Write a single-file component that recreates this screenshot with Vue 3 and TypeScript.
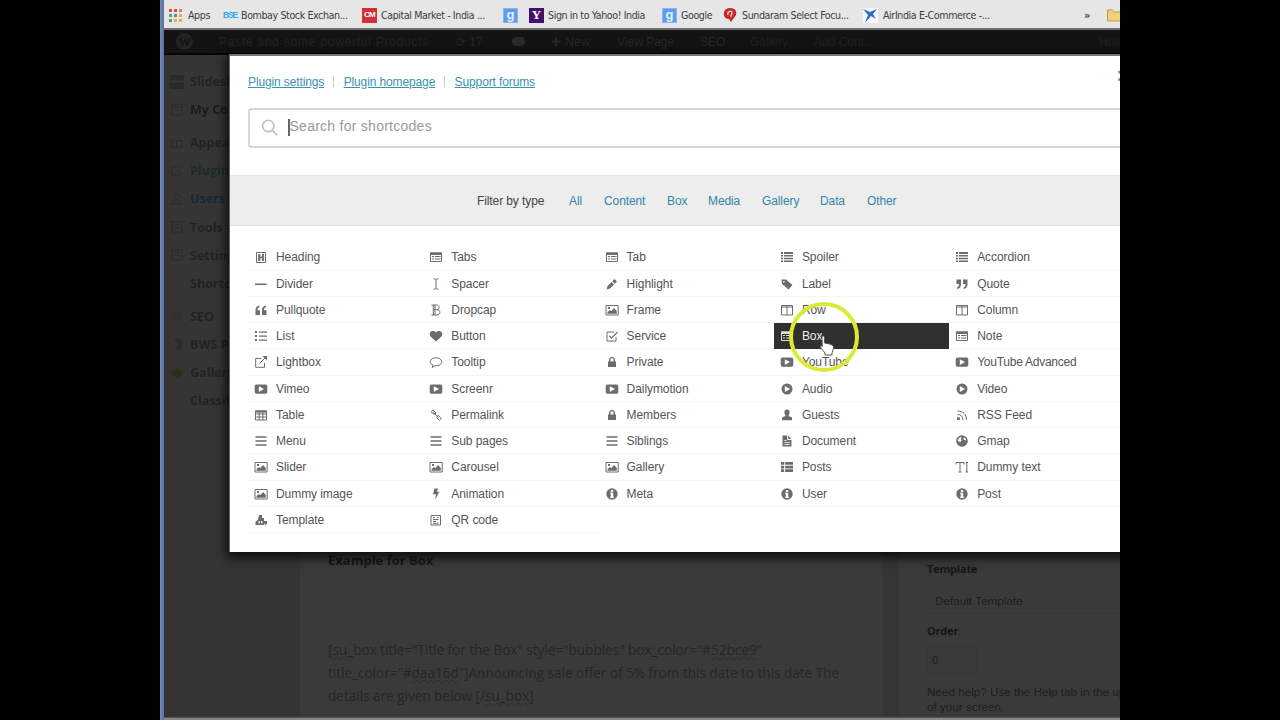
<script setup lang="ts">
interface Glyph { f?: string; s?: string }
interface Bookmark { label: string; kind: string; gap: number; width: number }

const bookmarks: Bookmark[] = [
  { label: 'Apps', kind: 'apps', gap: 5, width: 54 },
  { label: 'Bombay Stock Exchan...', kind: 'bse', gap: 3, width: 139 },
  { label: 'Capital Market - India ...', kind: 'cm', gap: 4, width: 141 },
  { label: '', kind: 'google', gap: 0, width: 26 },
  { label: 'Sign in to Yahoo! India', kind: 'yahoo', gap: 4, width: 133 },
  { label: 'Google', kind: 'google', gap: 4, width: 61 },
  { label: 'Sundaram Select Focu...', kind: 'sundaram', gap: 4, width: 140 },
  { label: 'AirIndia E-Commerce -...', kind: 'air', gap: 5, width: 140 },
]

const dots = ['#d64b4b', '#d64b4b', '#df7f62', '#4fa56a', '#5c7fd0', '#e2b13c', '#4fa56a', '#e2b13c', '#e2b13c']

const sideMenu = [
  { label: 'Slideshow', icon: 'slides', cls: '' },
  { label: 'My Content', icon: 'box', cls: 'dark' },
  { label: 'Appearance', icon: 'brush', cls: 'spaced' },
  { label: 'Plugins', icon: 'pen', cls: 'green' },
  { label: 'Users', icon: 'user', cls: 'blue' },
  { label: 'Tools', icon: 'box', cls: '' },
  { label: 'Settings', icon: 'box', cls: '' },
  { label: 'Shortcodes', icon: '', cls: '' },
  { label: 'SEO', icon: 'star', cls: 'spaced gold' },
  { label: 'BWS Plugins', icon: 'moon', cls: '' },
  { label: 'Gallery', icon: 'star', cls: 'olive' },
  { label: 'Classifieds', icon: '', cls: '' },
]

const sideIcons: Record<string, Glyph> = {
  slides: { f: 'M0 0H15V6H0ZM0 8H15V15H0Z' },
  box: { s: 'M2 2H13V13H2ZM5 5H10M5 8H10' },
  brush: { s: 'M2 3V12H7M7 5H13V12H7ZM2 3L5 6' },
  pen: { s: 'M2 3H8M2 3V12H11V8M6 9L13 2' },
  user: { s: 'M7 2A3 3 0 1 0 7 8A3 3 0 1 0 7 2M2 13C2 7 12 7 12 13Z' },
  star: { f: 'M2 5L8 2L13 5V10L8 13L2 10Z' },
  moon: { f: 'M4 2C10 0 13 3 13 8C13 12 10 14 6 13C10 10 9 6 4 2Z' },
}

const filters = [
  { label: 'All', width: 23 },
  { label: 'Content', width: 51 },
  { label: 'Box', width: 29 },
  { label: 'Media', width: 42 },
  { label: 'Gallery', width: 46 },
  { label: 'Data', width: 35 },
  { label: 'Other', width: 32 },
]

const icons: Record<string, Glyph> = {
  heading: { s: 'M2.5 2.5H11.5V12.5H2.5Z', f: 'M4.2 4H6.3V6.8H7.9V4H9.9V11H7.9V8.2H6.3V11H4.2Z' },
  window: { s: 'M1.5 3H12.5V11.5H1.5Z', f: 'M1 2.5H13V5H1ZM3 6H5V7H3ZM6 6H11.5V7H6ZM3 8.5H5V9.5H3ZM6 8.5H11.5V9.5H6Z' },
  lines: { f: 'M1 2H3V4H1ZM4 2H13V4H4ZM1 5H3V6.6H1ZM4 5H13V6.6H4ZM1 7.7H3V9.3H1ZM4 7.7H13V9.3H4ZM1 10.4H3V12H1ZM4 10.4H13V12H4Z' },
  divider: { f: 'M1 6.5H12.5V8H1Z' },
  spacer: { s: 'M4.5 1.8C6 1.8 7 2 7 3.2V10.8C7 12 6 12.2 4.5 12.2M9.5 1.8C8 1.8 7 2 7 3.2M7 10.8C7 12 8 12.2 9.5 12.2' },
  pencil: { f: 'M9.5 2L12 4.5L9.8 6.7L7.3 4.2ZM6.6 5L9.1 7.5L5 11.5L1.7 12.4L2.5 9Z' },
  tag: { f: 'M1.5 2.5H6L12.5 8L8.5 12.5L2 7ZM3.2 4.1V5.4H4.5V4.1Z' },
  quoteR: { f: 'M1.5 2.5H6V7.5C6 10 4.5 11.5 2 12V10.5C3.5 10 4 9 4 7H1.5ZM8 2.5H12.5V7.5C12.5 10 11 11.5 8.5 12V10.5C10 10 10.5 9 10.5 7H8Z' },
  quoteL: { f: 'M6 12H1.5V7C1.5 4.5 3 3 5.5 2.5V4C4 4.5 3.5 5.5 3.5 7.2H6ZM12.5 12H8V7C8 4.5 9.5 3 12 2.5V4C10.5 4.5 10 5.5 10 7.2H12.5Z' },
  bold: { s: 'M2.5 2H7.5C11 2 11 6.7 7.5 6.7H4.5M7.5 6.7C12 6.7 12 12 7.5 12H2.5M4.3 2V12M6 2V12' },
  image: { s: 'M1 2.5H13.2V12H1Z', f: 'M2.5 10.8V9L5 7L6.2 8.2L9 5L11.8 8V10.8ZM3 4H5V6H3Z' },
  columns: { s: 'M1.5 2.5H12.5V12H1.5ZM7 3V12M1.5 4H12.5' },
  list: { f: 'M1 2H3V4H1ZM5 2.5H13V3.8H5ZM1 6H3V8H1ZM5 6.5H13V7.8H5ZM1 10H3V12H1ZM5 10.5H13V11.8H5Z' },
  heart: { f: 'M7 12.5L1.5 7.5C-.5 4 2 1.6 4.5 2C6 2.2 7 3.5 7 3.5C7 3.5 8 2.2 9.5 2C12 1.6 14.5 4 12.5 7.5Z' },
  check: { s: 'M11 8V12H2V3H9.5M4.3 6.5L6.6 8.8L12.5 2.8M4.3 7.2L6.6 9.5L12.5 3.5' },
  external: { s: 'M7 3.5H1.7V12.3H10.5V8M5.5 8.5L12 2', f: 'M8.5 1H13V5.5Z' },
  bubble: { s: 'M7 2.8C3.2 2.8 1.2 4.6 1.2 6.8C1.2 8.4 2.3 9.5 3.8 10L3.2 12.5L6 10.7C10 11 12.8 9.3 12.8 6.8C12.8 4.5 10.5 2.8 7 2.8Z' },
  lock: { s: 'M4.5 7V4.7C4.5 1.5 9.5 1.5 9.5 4.7V7M5 7V4.7C5 2.3 9 2.3 9 4.7V7', f: 'M3 6.5H11V12H3Z' },
  play: { f: 'M2.5 2.5H11.5Q13.3 2.5 13.3 4.5V9.8Q13.3 11.8 11.5 11.8H2.5Q.7 11.8 .7 9.8V4.5Q.7 2.5 2.5 2.5ZM4.8 4.2V10.1L10 7.1Z' },
  circle: { f: 'M7 1.5A5.5 5.5 0 1 1 7 12.5A5.5 5.5 0 1 1 7 1.5ZM4.8 4V10L10 7Z' },
  table: { s: 'M1.5 3H12.5V12H1.5ZM1.5 6H12.5M1.5 9H12.5M5.2 3V12M8.9 3V12', f: 'M1 2.5H13V4.6H1Z' },
  link: { s: 'M5.5 6.5L2 3.8L3.9 1.9L7 5L6 6M4.5 4.5L9.5 9.8M8 8.5L9.3 7.4L12.3 10.5L10.3 12.3L7.5 9.5' },
  person: { f: 'M7 1.5C9.3 1.5 10 3.3 9.5 5.2C9.2 6.7 8.5 7.2 8.5 8L12 9.5V12.3H2V9.5L5.5 8C5.5 7.2 4.8 6.7 4.5 5.2C4 3.3 4.7 1.5 7 1.5Z' },
  rss: { s: 'M2.5 3C8 3 11.5 6.5 11.5 12M2.5 6.5C6 6.5 8 8.5 8 12', f: 'M2 9.2H4.8V12H2Z' },
  menu: { f: 'M1.5 2.3H12.5V3.8H1.5ZM1.5 6.3H12.5V7.8H1.5ZM1.5 10.3H12.5V11.8H1.5Z' },
  doc: { f: 'M2.5 1.5H7.2V6H11.5V12.5H2.5ZM8.2 1.5L11.5 5H8.2ZM4.3 6V6.8H6.5V6ZM4.3 8V8.8H9.7V8ZM4.3 10V10.8H9.7V10Z' },
  globe: { f: 'M7 1.2A5.7 5.7 0 1 1 7 12.8A5.7 5.7 0 1 1 7 1.2ZM6.5 2.8L3.8 4L2.8 6.8L5 8.3L6.8 6.5L5.8 5.2ZM9 3.3L8.4 5.4L10.6 6.4L11.2 5Z' },
  posts: { f: 'M1 2H4.2V4.8H1ZM5.2 2H13V4.8H5.2ZM1 5.7H4.2V8.4H1ZM5.2 5.7H13V8.4H5.2ZM1 9.3H4.2V12H1ZM5.2 9.3H13V12H5.2Z' },
  text: { s: 'M1 4.5V2.5H9V4.5M5 2.5V12M3.5 12H6.5M11.8 2.5V12M10.5 2.5H13M10.5 12H13' },
  bolt: { f: 'M5.5 1.5H9L7.8 4.8H10.3L6 12.8L7 7.2H4Z' },
  info: { f: 'M7 1.3A5.7 5.7 0 1 1 7 12.7A5.7 5.7 0 1 1 7 1.3ZM5.8 2.9V4.9H8.2V2.9ZM5.2 5.7V7H5.8V9.8H5.2V11H8.9V9.8H8.2V5.7Z' },
  template: { f: 'M5 2H8V5H10V8H13V10.5L11.5 12L10 10.5V12H1.5V9L4 6.5ZM4.5 8V10.5H5.7V8ZM7.2 8V10.5H8.4V8Z' },
  qr: { s: 'M2 2.5H11.5V12H2ZM4 4.5H6M4 6.5H9.5M4 8.5H7M4 10.3H9.5M8 4.5H9.5' },
}

const names: [string, string][] = [
  ['Heading', 'heading'], ['Tabs', 'window'], ['Tab', 'window'], ['Spoiler', 'lines'], ['Accordion', 'lines'],
  ['Divider', 'divider'], ['Spacer', 'spacer'], ['Highlight', 'pencil'], ['Label', 'tag'], ['Quote', 'quoteR'],
  ['Pullquote', 'quoteL'], ['Dropcap', 'bold'], ['Frame', 'image'], ['Row', 'columns'], ['Column', 'columns'],
  ['List', 'list'], ['Button', 'heart'], ['Service', 'check'], ['Box', 'window'], ['Note', 'window'],
  ['Lightbox', 'external'], ['Tooltip', 'bubble'], ['Private', 'lock'], ['YouTube', 'play'], ['YouTube Advanced', 'play'],
  ['Vimeo', 'play'], ['Screenr', 'play'], ['Dailymotion', 'play'], ['Audio', 'circle'], ['Video', 'circle'],
  ['Table', 'table'], ['Permalink', 'link'], ['Members', 'lock'], ['Guests', 'person'], ['RSS Feed', 'rss'],
  ['Menu', 'menu'], ['Sub pages', 'menu'], ['Siblings', 'menu'], ['Document', 'doc'], ['Gmap', 'globe'],
  ['Slider', 'image'], ['Carousel', 'image'], ['Gallery', 'image'], ['Posts', 'posts'], ['Dummy text', 'text'],
  ['Dummy image', 'image'], ['Animation', 'bolt'], ['Meta', 'info'], ['User', 'info'], ['Post', 'info'],
  ['Template', 'template'], ['QR code', 'qr'],
]
const shortcodes = names.map(([label, icon]) => ({ label, glyph: icons[icon], active: label === 'Box' }))
</script>

<template>
  <div class="stage">
    <div class="window">
      <div class="edge"></div>
      <div class="browser">
        <div class="bookmarks">
          <div v-for="(b, i) in bookmarks" :key="i" class="bookmark" :style="{ width: b.width + 'px', gap: b.gap + 'px' }">
            <span v-if="b.kind === 'apps'" class="apps"><i v-for="(c, k) in dots" :key="k" :style="{ background: c }"></i></span>
            <span v-else-if="b.kind === 'bse'" class="bse">BSE</span>
            <span v-else-if="b.kind === 'cm'" class="sq cm">CM</span>
            <span v-else-if="b.kind === 'google'" class="sq google">g</span>
            <span v-else-if="b.kind === 'yahoo'" class="sq yahoo">Y</span>
            <svg v-else-if="b.kind === 'sundaram'" class="fav" viewBox="0 0 15 15">
              <path fill="#c6282d" d="M7 0C12 0 14 3 13 7L8 14L6 11C2 11 0 8 1 4C2 1 4 0 7 0Z" />
              <path fill="none" stroke="#f1d9d9" stroke-width="1.3" d="M5 7C4 3 9 2 9 5C9 7 7 7 8 9" />
            </svg>
            <svg v-else class="fav" viewBox="0 0 15 15">
              <path fill="#f7faff" d="M0 0H15V15H0Z" />
              <path fill="#2e6dc0" d="M0 1L7 4L14 1L10 6L13 11L8 8L2 15L5 7Z" />
            </svg>
            <span v-if="b.label">{{ b.label }}</span>
          </div>
          <span class="more">»</span>
          <svg class="folder" viewBox="0 0 16 14"><path fill="#f2cf79" stroke="#c49a49" d="M1 2H6L8 4H15V13H1Z" /></svg>
        </div>
        <div class="adminbar">
          <span class="wp">W</span>
          <span class="site">Paste and some powerful Products</span>
          <span class="upd">⟳ 17</span>
          <span class="cmt"></span>
          <span class="new">✚ New</span>
          <span class="view">View Page</span>
          <span class="seo">SEO</span>
          <span class="gal">Gallery</span>
          <span class="edit">Add Cont...</span>
          <span class="how">How</span>
        </div>
        <div class="page">
          <div class="sidebar">
            <div v-for="m in sideMenu" :key="m.label" class="side-item" :class="m.cls">
              <svg viewBox="0 0 15 15">
                <path v-if="m.icon && sideIcons[m.icon].f" :d="sideIcons[m.icon].f" fill="currentColor" />
                <path v-if="m.icon && sideIcons[m.icon].s" :d="sideIcons[m.icon].s" fill="none" stroke="currentColor" />
              </svg>
              <span>{{ m.label }}</span>
            </div>
          </div>
          <div class="editor">
            <div class="example">Example for Box</div>
            <p>[<u>su_</u>box title="Title for the Box" style="bubbles" box_color="#<u>52bce9</u>"</p>
            <p>title_color="#<u>daa16d</u>"]Announcing sale offer of 5% from this date to this date The</p>
            <p>details are given below [/<u>su_box</u>]</p>
          </div>
          <div class="attributes">
            <b>Template</b>
            <div class="select">Default Template</div>
            <b>Order</b>
            <div class="order">0</div>
            <div class="help">Need help? Use the Help tab in the upper<br>of your screen.</div>
          </div>
        </div>
        <div class="bottom"></div>
      </div>

      <div class="modal">
        <div class="top">
          <div class="links">
            <a>Plugin settings</a><i></i><a>Plugin homepage</a><i></i><a>Support forums</a>
          </div>
          <div class="search">
            <svg viewBox="0 0 18 18"><path d="M7.3 1.3A5.7 5.7 0 1 1 7.3 12.7A5.7 5.7 0 1 1 7.3 1.3M11.5 11.5L16.3 16.3" fill="none" stroke="#bdbdbd" stroke-width="1.6" /></svg>
            <span class="caret"></span><span>Search for shortcodes</span>
          </div>
        </div>
        <div class="filter">
          <span class="filter-title">Filter by type</span>
          <a v-for="f in filters" :key="f.label" :style="{ width: f.width + 'px' }">{{ f.label }}</a>
        </div>
        <div class="grid">
          <div v-for="s in shortcodes" :key="s.label" class="code" :class="{ active: s.active, long: s.label.length > 14 }">
            <svg viewBox="0 0 14 14">
              <path v-if="s.glyph.s" :d="s.glyph.s" fill="none" stroke="currentColor" />
              <path v-if="s.glyph.f" :d="s.glyph.f" fill="currentColor" fill-rule="evenodd" />
            </svg>
            <span>{{ s.label }}</span>
          </div>
        </div>
        <span class="close">×</span>
      </div>
      <div class="ring"></div>
      <svg class="hand" viewBox="0 0 16 22">
        <path fill="#fff" stroke="#555" d="M3 1.5C4 .5 5.5 1 5.5 2.5V8L8 8.5L10.5 9L13 10C14.5 10.5 14.5 12 14.3 14L13 18V20H6V18L2 13C.5 11 2 10 3.2 11.5Z" />
      </svg>
    </div>
  </div>
</template>

<style>
html, body { background: #000; overflow: hidden; }
</style>
<style scoped>
* { box-sizing: border-box; }
.stage { width: 1280px; height: 720px; background: #000; display: flex; justify-content: center; overflow: hidden; font-family: "Liberation Sans", Arial, sans-serif; }
.window { position: relative; width: 960px; height: 720px; display: flex; overflow: hidden; }
.edge { width: 4px; flex: none; background: linear-gradient(90deg, #7289b7, #5a6f99); }
.browser { width: 956px; display: flex; flex-direction: column; white-space: nowrap; }
.bookmarks { height: 30px; background: #e6e6e6; border-bottom: 2px solid #707070; display: flex; align-items: center; padding: 2px 0 0 5px; color: #3c3c3c; font: 10.6px "DejaVu Sans Condensed", "DejaVu Sans", sans-serif; letter-spacing: -.4px; flex: none; }
.bookmark { display: flex; align-items: center; flex: none; }
.bookmark > span { flex: none; }
.apps { width: 14px; display: grid; grid-template-columns: repeat(3, 3px); gap: 2px; }
.apps i { height: 3px; }
.bse { width: 15px; color: #3ca3da; font: bold 8.5px "Liberation Sans", sans-serif; letter-spacing: -1.1px; background: #dcebf2; line-height: 12px; }
.sq { width: 15px; height: 15px; color: #fff; text-align: center; font: bold 13px/14px "Liberation Sans", sans-serif; letter-spacing: 0; }
.cm { background: #cf3138; font-size: 8px; letter-spacing: -.6px; }
.google { background: #5d9bec; color: #e8f2ff; line-height: 11px; border: 1px solid #8ab6ef; }
.yahoo { background: #43106f; font-family: "Liberation Serif", serif; }
.fav { width: 15px; height: 15px; flex: none; }
.more { margin-left: 81px; width: 22px; font-size: 11px; font-weight: bold; flex: none; }
.folder { width: 17px; height: 14px; flex: none; }
.adminbar { height: 25px; flex: none; background: #131313; border-bottom: 2px solid #050505; display: flex; align-items: center; color: #262626; font-size: 12px; padding-left: 12px; }
.adminbar span { flex: none; }
.wp { width: 17px; height: 17px; border-radius: 50%; background: #242424; color: #131313; text-align: center; font: bold 13px/17px "Liberation Serif", serif; margin-right: 26px; }
.site { width: 237px; color: #222; letter-spacing: .75px; }
.upd { width: 56px; }
.cmt { width: 13px; height: 9px; border-radius: 5px; background: #2b2b2b; margin-right: 26px; }
.new { width: 66px; letter-spacing: .4px; } .view { width: 83px; } .seo { width: 50px; } .gal { width: 64px; color: #202020; } .edit { width: 285px; color: #202020; } .how { color: #202020; }
.page { flex: 1; display: flex; background: #363636; min-height: 0; overflow: hidden; }
.sidebar { width: 136px; padding-top: 12.5px; flex: none; background: linear-gradient(90deg, #30343a 0 4px, #3a322f 5px 7px, #353535 11px); }
.side-item { height: 28.2px; display: flex; align-items: center; gap: 6px; padding-left: 6px; font: bold 12.5px "Open Sans", "Noto Sans", sans-serif; color: #222325; }
.side-item svg { width: 14px; height: 14px; flex: none; color: #292a2b; }
.side-item.dark { color: #1a1b1d; }
.side-item.spaced { margin-top: 4.6px; }
.side-item.green { color: #1d2b2a; }
.side-item.blue { color: #1c253a; }
.side-item.gold svg { color: #343226; }
.side-item.olive svg { color: #2d3119; }
.editor { width: 583px; background: #3a3a3a; padding: 494px 0 0 28px; flex: none; color: #262626; font: 13.65px/23px "Open Sans", "Noto Sans", sans-serif; }
.example { font: bold 13px/22px "Open Sans", "Noto Sans", sans-serif; color: #171717; margin-bottom: 67px; }
.editor p { margin: 0; letter-spacing: -.05px; }
.editor u { text-decoration: underline wavy #2b2b2b 1px; }
.attributes { margin-left: 16px; width: 224px; background: #3a3a3a; padding: 506px 0 0 28px; flex: none; color: #1e1e1e; font-size: 11px; }
.attributes b { display: block; font: bold 11px/15px "Open Sans", sans-serif; letter-spacing: -.2px; color: #151515; }
.select { width: 220px; height: 26px; margin: 12px 0 9px; padding-left: 8px; font: 11.7px/26px "Liberation Sans", sans-serif; border-bottom: 1px solid #353535; }
.order { width: 50px; height: 28px; margin: 8px 0 10px; padding-left: 4px; border: 1px solid #363636; line-height: 27px; }
.help { line-height: 15px; font-size: 11.7px; }
.bottom { height: 3px; background: #858585; border-top: 1px solid #555; flex: none; }

.modal { position: absolute; left: 69px; top: 54px; width: 900px; height: 498px; background: #fff; border-top: 2px solid #777; border-left: 1px solid #666; box-shadow: 0 3px 10px 3px rgba(0, 0, 0, .75); color: #555; font-size: 12px; white-space: nowrap; }
.top { height: 119px; padding: 17.5px 0 0 18px; }
.links { display: flex; align-items: center; color: #3b93b0; line-height: 16px; letter-spacing: -.12px; }
.links a { text-decoration: underline; }
.links i { width: 1px; height: 11px; background: #c9c9c9; margin: 0 9.2px; }
.search { margin-top: 18.5px; height: 40px; width: 900px; border: 2px solid #d6d6d6; border-radius: 4px; display: flex; align-items: center; padding: 0 0 4px 11px; font-size: 14px; letter-spacing: .26px; color: #999; }
.search svg { width: 18px; height: 18px; margin: 4px 9px 0 0; }
.caret { width: 1.5px; height: 17px; background: #666; margin-top: 3px; }
.filter { height: 51px; background: #ededed; border-bottom: 1px solid #dcdcdc; border-top: 1px solid #e5e5e5; display: flex; align-items: center; gap: 12px; padding-left: 247px; color: #3287a5; }
.filter a, .filter-title { flex: none; letter-spacing: -.1px; }
.filter-title { color: #444; width: 80px; }
.grid { display: grid; grid-template-columns: repeat(5, 175.3px); grid-auto-rows: 26.25px; padding: 18.3px 0 0 18px; }
.code { display: flex; align-items: center; gap: 8px; padding: 1px 0 0 6px; border-bottom: 1px solid #f5f5f5; color: #555; letter-spacing: -.07px; }
.long { letter-spacing: -.25px; }
.code svg { width: 14px; height: 14px; flex: none; color: #6c6c6c; }
.active { background: #303030; color: #eee; border-color: #303030; }
.active svg { color: #ddd; }
.close { position: absolute; left: 886px; top: 7px; font-size: 24px; line-height: 26px; color: #777; }
.ring { position: absolute; left: 629px; top: 302px; width: 70px; height: 70px; border: 4px solid #dbea35; border-radius: 50%; }
.hand { position: absolute; left: 659px; top: 335px; width: 16px; height: 22px; }
</style>
